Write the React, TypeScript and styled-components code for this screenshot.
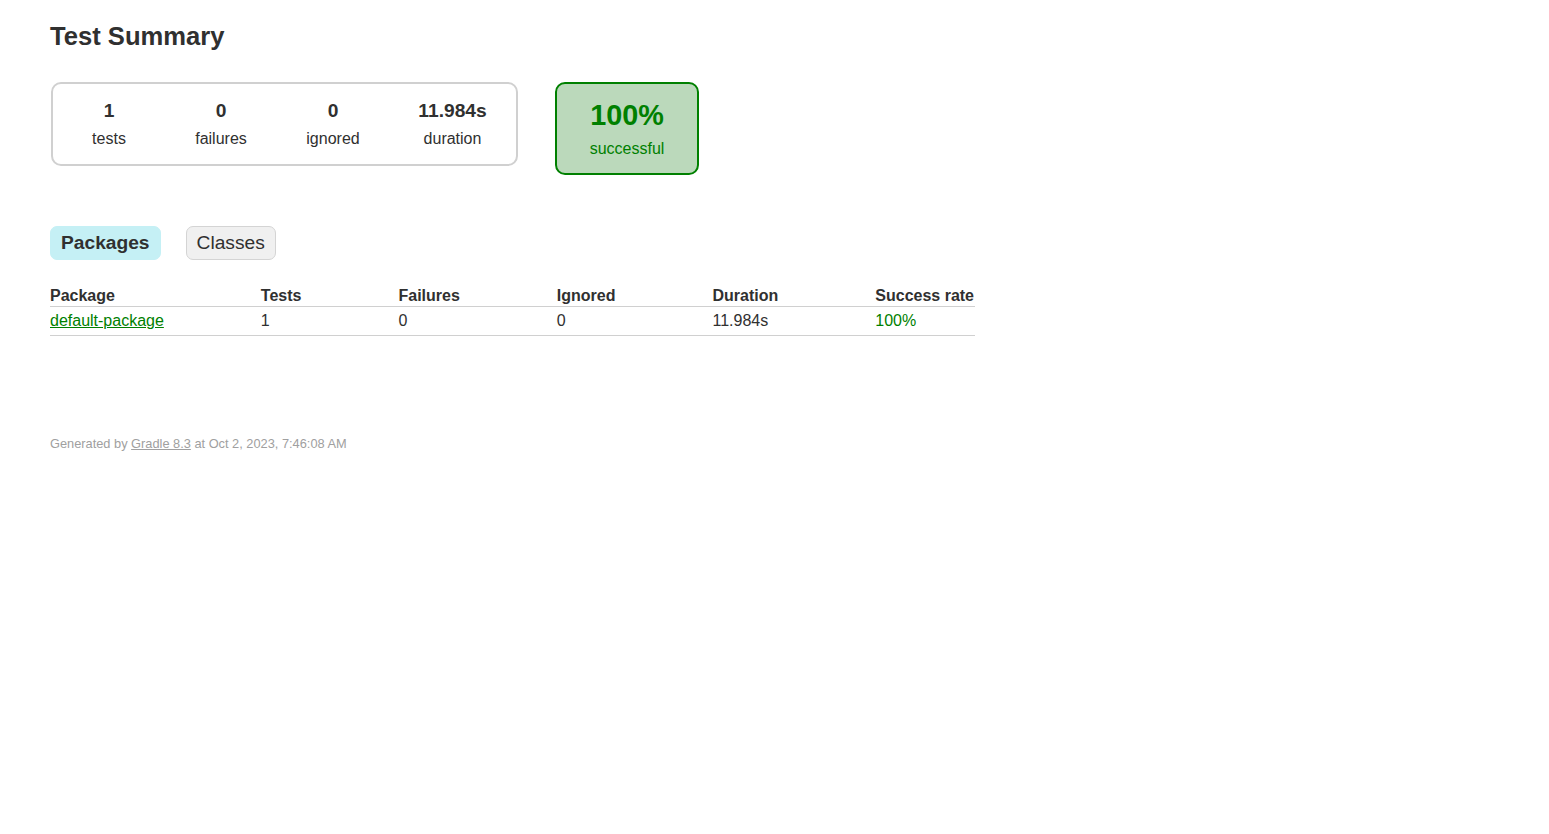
import React from "react";
import styled, { createGlobalStyle } from "styled-components";

const GlobalStyle = createGlobalStyle`
  html, body {
    margin: 0;
    padding: 0;
    background: #ffffff;
  }
  body {
    font-family: "Liberation Sans", Arial, sans-serif;
    font-size: 16px;
    color: #303030;
  }
`;

const Content = styled.div`
  padding: 22px 50px 30px 50px;
`;

const Title = styled.h1`
  font-size: 25.6px;
  font-weight: bold;
  line-height: 29px;
  margin: 0;
  white-space: nowrap;
`;

const Summary = styled.div`
  display: flex;
  align-items: flex-start;
  margin-top: 30px;
  margin-bottom: 40px;
`;

const SummaryGroup = styled.div`
  display: flex;
  margin: 1px;
  border: solid 2px #d0d0d0;
  border-radius: 10px;
`;

const InfoBox = styled.div<{ $width: number }>`
  width: ${(p) => p.$width}px;
  margin: 1px;
  padding: 15px 0;
  text-align: center;
`;

const Counter = styled.div`
  font-size: 19.2px;
  font-weight: bold;
  margin-bottom: 8px;
`;

const Label = styled.p`
  margin: 0;
`;

const SuccessRate = styled.div`
  width: 140px;
  margin: 1px 1px 1px 36px;
  padding: 15px 0;
  text-align: center;
  border: solid 2px #008000;
  border-radius: 10px;
  background-color: #bbd9bb;
  color: #008000;
`;

const Percent = styled.div`
  font-size: 28.8px;
  font-weight: bold;
  margin-bottom: 8px;
`;

const TabLinks = styled.ul`
  display: flex;
  margin: 0 0 16px 0;
  padding: 10px 0;
  min-width: 800px;
`;

const Tab = styled.li<{ $selected?: boolean }>`
  list-style: none;
  padding: 5px 10px;
  margin-right: 25px;
  border-radius: 7px;
  border: solid 1px ${(p) => (p.$selected ? "#c5f0f5" : "#d4d4d4")};
  background-color: ${(p) => (p.$selected ? "#c5f0f5" : "#f0f0f0")};
`;

const TabHeading = styled.h2`
  margin: 0;
  padding: 0;
  font-size: 19.2px;
  font-weight: bold;
  white-space: nowrap;
`;

const TabLink = styled.a`
  display: block;
  font-size: 19.2px;
  color: #303030;
  text-decoration: none;
  cursor: pointer;
`;

const Table = styled.table`
  min-width: 350px;
  border-collapse: collapse;
  border-bottom: solid #d0d0d0 1px;
`;

const Th = styled.th`
  text-align: left;
  white-space: nowrap;
  padding: 1px 1px 1px 96px;
  border-bottom: solid #d0d0d0 1px;
  &:first-child {
    padding-left: 0;
  }
`;

const Td = styled.td<{ $success?: boolean }>`
  white-space: nowrap;
  padding: 5px 1px 5px 96px;
  color: ${(p) => (p.$success ? "#008000" : "#303030")};
  &:first-child {
    padding-left: 0;
  }
`;

const GreenLink = styled.a`
  color: #008000;
  text-decoration: underline;
`;

const Footer = styled.div`
  margin-top: 100px;
  font-size: 12.8px;
  white-space: nowrap;
  color: #a0a0a0;
`;

const FooterText = styled.p`
  margin: 0;
`;

const FooterLink = styled.a`
  color: #a0a0a0;
  text-decoration: underline;
`;

const infoItems = [
  { value: "1", label: "tests", width: 110 },
  { value: "0", label: "failures", width: 110 },
  { value: "0", label: "ignored", width: 110 },
  { value: "11.984s", label: "duration", width: 125 },
];

export default function App() {
  return (
    <>
      <GlobalStyle />
      <Content>
        <Title>Test Summary</Title>
        <Summary>
          <SummaryGroup>
            {infoItems.map((item) => (
              <InfoBox key={item.label} $width={item.width}>
                <Counter>{item.value}</Counter>
                <Label>{item.label}</Label>
              </InfoBox>
            ))}
          </SummaryGroup>
          <SuccessRate>
            <Percent>100%</Percent>
            <Label>successful</Label>
          </SuccessRate>
        </Summary>
        <TabLinks>
          <Tab $selected>
            <TabHeading>Packages</TabHeading>
          </Tab>
          <Tab>
            <TabLink>Classes</TabLink>
          </Tab>
        </TabLinks>
        <Table>
          <thead>
            <tr>
              <Th>Package</Th>
              <Th>Tests</Th>
              <Th>Failures</Th>
              <Th>Ignored</Th>
              <Th>Duration</Th>
              <Th>Success rate</Th>
            </tr>
          </thead>
          <tbody>
            <tr>
              <Td $success>
                <GreenLink href="#">default-package</GreenLink>
              </Td>
              <Td>1</Td>
              <Td>0</Td>
              <Td>0</Td>
              <Td>11.984s</Td>
              <Td $success>100%</Td>
            </tr>
          </tbody>
        </Table>
        <Footer>
          <FooterText>
            Generated by <FooterLink href="#">Gradle 8.3</FooterLink> at Oct 2, 2023, 7:46:08 AM
          </FooterText>
        </Footer>
      </Content>
    </>
  );
}
